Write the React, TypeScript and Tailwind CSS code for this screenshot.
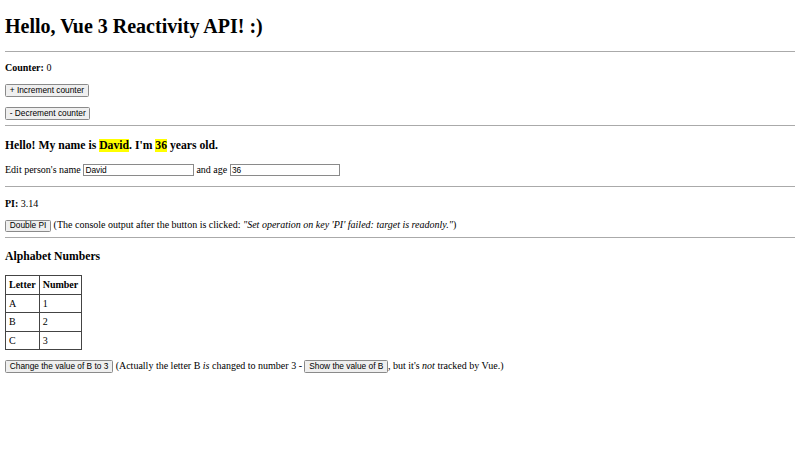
import type { ReactNode } from "react";

function Btn({ children }: { children: ReactNode }) {
  return (
    <button className="inline-block align-baseline px-[3.75px] py-[0.6px] border border-[#8a8a8a] rounded-[1.5px] bg-[#efefef] text-black font-['Liberation_Sans',Arial,sans-serif] text-[8.33px] leading-[1.15]">
      {children}
    </button>
  );
}

function Field({ value }: { value: string }) {
  return (
    <input
      readOnly
      value={value}
      className="inline-block align-baseline w-[110.7px] h-[12.5px] px-[1.25px] border border-[#8a8a8a] bg-white text-black font-['Liberation_Sans',Arial,sans-serif] text-[8.33px] leading-[1.15]"
    />
  );
}

function Hr() {
  return <hr className="my-[5px] h-0 border-0 border-t-[1.5px] border-[#aaaaaa]" />;
}

export default function App() {
  return (
    <div className="min-h-[450px] bg-white px-[5px] font-['Liberation_Serif','Times_New_Roman',serif] text-[10px] leading-[1.15] text-black">
      {/* header */}
      <h1 className="mt-[15px] mb-[13px] text-[20px] font-bold leading-[1.15]">Hello, Vue 3 Reactivity API! :)</h1>
      <Hr />

      {/* counter */}
      <p className="my-[10px]">
        <strong>Counter:</strong> 0
      </p>
      <div>
        <Btn>+ Increment counter</Btn>
      </div>
      <div className="mt-[10px]">
        <Btn>- Decrement counter</Btn>
      </div>
      <Hr />

      {/* person */}
      <h3 className="mt-[12.8px] mb-[11.7px] text-[11.7px] font-bold leading-[1.15]">
        Hello! My name is <mark className="bg-[#ffff00] text-black">David</mark>. I'm{" "}
        <mark className="bg-[#ffff00] text-black">36</mark> years old.
      </h3>
      <p className="my-[10px]">
        Edit person's name <Field value="David" /> and age <Field value="36" />
      </p>
      <Hr />

      {/* readonly */}
      <p className="mt-[10.5px] mb-[10px]">
        <strong>PI:</strong> 3.14
      </p>
      <div>
        <Btn>Double PI</Btn> (The console output after the button is clicked:{" "}
        <i>"Set operation on key 'PI' failed: target is readonly."</i>)
      </div>
      <Hr />

      {/* table */}
      <h3 className="mt-[11.5px] mb-[11.7px] text-[11.7px] font-bold leading-[1.15]">Alphabet Numbers</h3>
      <table className="border-collapse border border-[#444]">
        <thead>
          <tr>
            <th className="border border-[#444] p-[3px] text-left font-bold">Letter</th>
            <th className="border border-[#444] p-[3px] text-left font-bold">Number</th>
          </tr>
        </thead>
        <tbody>
          {[
            ["A", "1"],
            ["B", "2"],
            ["C", "3"],
          ].map(([l, n]) => (
            <tr key={l}>
              <td className="border border-[#444] p-[3px]">{l}</td>
              <td className="border border-[#444] p-[3px]">{n}</td>
            </tr>
          ))}
        </tbody>
      </table>
      <p className="my-[10px]">
        <Btn>Change the value of B to 3</Btn> (Actually the letter B <i>is</i> changed to number 3 -{" "}
        <Btn>Show the value of B</Btn>, but it's <i>not</i> tracked by Vue.)
      </p>
    </div>
  );
}
